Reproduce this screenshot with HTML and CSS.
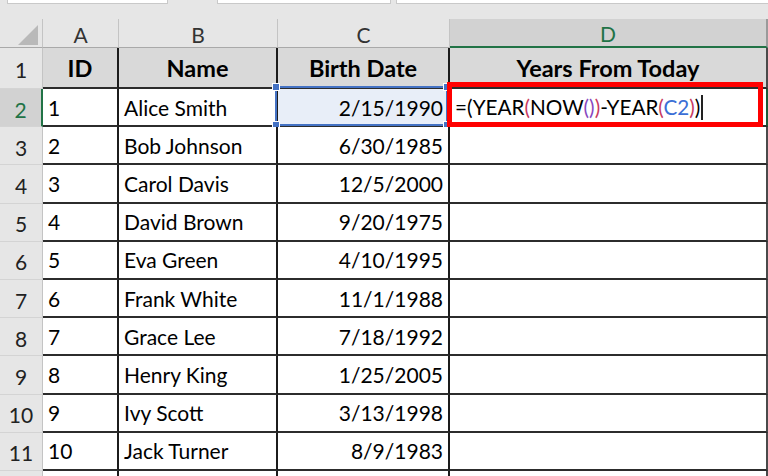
FILE: index.html
```html
<!DOCTYPE html>
<html>
<head>
<meta charset="utf-8">
<link rel="stylesheet" href="styles.css">
</head>
<body>
<div class="topbar">
  <div class="box b1"></div>
  <div class="box b2"></div>
  <div class="box b3"></div>
</div>
<div class="sheet">
  <div class="corner"><svg width="20" height="20" viewBox="0 0 20 20"><polygon points="20,0 20,20 0,20" fill="#b9b9b9"/></svg></div>
  <div class="colhdr">A</div>
  <div class="colhdr">B</div>
  <div class="colhdr">C</div>
  <div class="colhdr active">D</div>

  <div class="rowhdr">1</div>
  <div class="cell head">ID</div>
  <div class="cell head">Name</div>
  <div class="cell head">Birth Date</div>
  <div class="cell head last">Years From Today</div>

  <div class="rowhdr active">2</div>
  <div class="cell">1</div>
  <div class="cell">Alice Smith</div>
  <div class="cell num sel">2/15/1990<span class="selbox"><i class="h tl"></i><i class="h tr"></i><i class="h bl"></i><i class="h br"></i></span></div>
  <div class="cell last edit"><span class="formula">=(YEAR<span class="p1">(</span>NOW<span class="p2">()</span><span class="p1">)</span>-YEAR<span class="p1">(</span><span class="ref">C2</span><span class="p1">)</span>)</span><span class="caret"></span><span class="redbox"></span></div>

  <div class="rowhdr">3</div>
  <div class="cell">2</div>
  <div class="cell">Bob Johnson</div>
  <div class="cell num">6/30/1985</div>
  <div class="cell last"></div>

  <div class="rowhdr">4</div>
  <div class="cell">3</div>
  <div class="cell">Carol Davis</div>
  <div class="cell num">12/5/2000</div>
  <div class="cell last"></div>

  <div class="rowhdr">5</div>
  <div class="cell">4</div>
  <div class="cell">David Brown</div>
  <div class="cell num">9/20/1975</div>
  <div class="cell last"></div>

  <div class="rowhdr">6</div>
  <div class="cell">5</div>
  <div class="cell">Eva Green</div>
  <div class="cell num">4/10/1995</div>
  <div class="cell last"></div>

  <div class="rowhdr">7</div>
  <div class="cell">6</div>
  <div class="cell">Frank White</div>
  <div class="cell num">11/1/1988</div>
  <div class="cell last"></div>

  <div class="rowhdr">8</div>
  <div class="cell">7</div>
  <div class="cell">Grace Lee</div>
  <div class="cell num">7/18/1992</div>
  <div class="cell last"></div>

  <div class="rowhdr">9</div>
  <div class="cell">8</div>
  <div class="cell">Henry King</div>
  <div class="cell num">1/25/2005</div>
  <div class="cell last"></div>

  <div class="rowhdr">10</div>
  <div class="cell">9</div>
  <div class="cell">Ivy Scott</div>
  <div class="cell num">3/13/1998</div>
  <div class="cell last"></div>

  <div class="rowhdr">11</div>
  <div class="cell">10</div>
  <div class="cell">Jack Turner</div>
  <div class="cell num">8/9/1983</div>
  <div class="cell last"></div>

  <div class="rowhdr blank"></div>
  <div class="cell blank"></div>
  <div class="cell blank"></div>
  <div class="cell blank"></div>
  <div class="cell blank last"></div>
</div>
</body>
</html>
```

FILE: styles.css
```css
* { box-sizing: border-box; }
html, body {
  margin: 0;
  padding: 0;
}
body {
  width: 768px;
  height: 476px;
  overflow: hidden;
  background: #e6e6e6;
  font-family: Lato, "Open Sans", sans-serif;
  font-size: 21px;
  color: #000;
}
.topbar {
  display: flex;
  height: 4px;
  padding-left: 7px;
  margin-bottom: 15px;
}
.box {
  height: 4px;
  background: #fff;
  border: 1px solid #c9c9c9;
  border-top: none;
}
.b1 { width: 161px; }
.b2 { width: 174px; margin-left: 49px; }
.b3 { flex: 1; margin-left: 5px; border-right: none; }

.sheet {
  display: grid;
  grid-template-columns: 43px 76px 159px 172px 318px;
  grid-template-rows: 29px 41px repeat(10, 38.2px) 20px;
}
.corner {
  display: flex;
  justify-content: flex-end;
  align-items: flex-end;
  padding: 0 4px 2px 0;
  background: #e6e6e6;
  border-right: 1px solid #c4c4c4;
  border-bottom: 1px solid #a9a9a9;
}
.colhdr {
  display: flex;
  align-items: center;
  justify-content: center;
  background: #e6e6e6;
  border-right: 1px solid #c4c4c4;
  border-bottom: 1px solid #a9a9a9;
  color: #333;
  padding-top: 2px;
}
.colhdr.active {
  background: #d2d2d2;
  color: #217346;
  border-bottom: 2px solid #217346;
  border-right: 2px solid #9a9a9a;
}
.rowhdr {
  display: flex;
  align-items: center;
  justify-content: center;
  background: #e6e6e6;
  border-right: 1px solid #c4c4c4;
  border-bottom: 1px solid #d4d4d4;
  color: #222;
  padding-top: 3px;
}
.rowhdr.active {
  background: #d2d2d2;
  color: #217346;
  border-right: 2px solid #217346;
}
.cell {
  position: relative;
  display: flex;
  align-items: center;
  background: #fff;
  border-right: 2px solid #1c1c1c;
  border-bottom: 2px solid #2c2c2c;
  padding: 0 5px;
  white-space: nowrap;
}
.cell.head {
  background: #d9d9d9;
  font-weight: bold;
  font-size: 23.5px;
  justify-content: center;
  padding-top: 1px;
}
.cell.num { justify-content: flex-end; }
.cell.last { border-right: 2px solid #4a4a4a; }
.cell.blank { border-bottom: none; }
.rowhdr.blank { border-bottom: none; }

.cell.sel { background: #e8eef8; }
.selbox {
  position: absolute;
  left: -3px;
  top: -3px;
  width: 173px;
  height: 40px;
  border: 2px solid #4472c4;
}
.h {
  position: absolute;
  width: 8px;
  height: 8px;
  background: #4472c4;
  border: 1px solid #fff;
}
.h.tl { left: -5px; top: -5px; }
.h.tr { right: -5px; top: -5px; }
.h.bl { left: -5px; bottom: -5px; }
.h.br { right: -5px; bottom: -5px; }

.cell.edit { border-right-color: #1e5a38; }
.formula { color: #000; font-size: 20.7px; }
.p1 { color: #c83a62; }
.p2 { color: #8848c0; }
.ref { color: #3b6fd6; }
.caret {
  display: inline-block;
  width: 2px;
  height: 25px;
  background: #222;
  margin-left: 1px;
}
.redbox {
  position: absolute;
  left: -3px;
  top: -7px;
  width: 316px;
  height: 45px;
  border: 5px solid #ff0000;
}
```
